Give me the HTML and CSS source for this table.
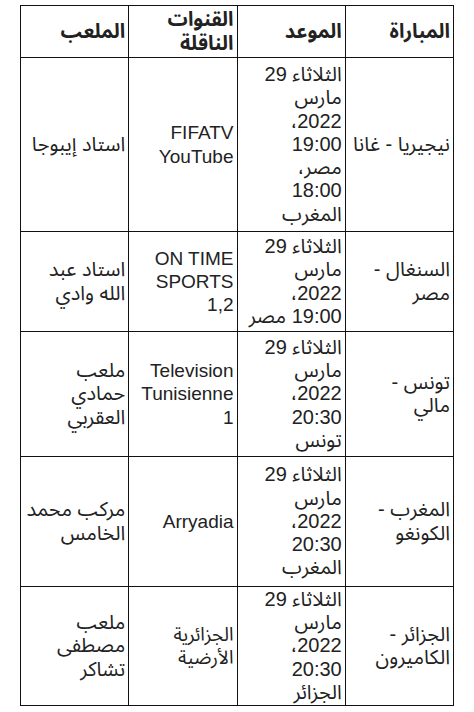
FILE: index.html
```html
<!DOCTYPE html>
<html lang="ar" dir="rtl">
<head>
<meta charset="utf-8">
<link rel="stylesheet" href="styles.css">
</head>
<body>
<table class="matches">
  <thead>
    <tr class="row-head">
      <th>المباراة</th>
      <th>الموعد</th>
      <th>القنوات<br>الناقلة</th>
      <th>الملعب</th>
    </tr>
  </thead>
  <tbody>
    <tr class="row-1">
      <td>نيجيريا - غانا</td>
      <td>الثلاثاء 29<br>مارس<br>2022،<br>19:00<br>مصر،<br>18:00<br>المغرب</td>
      <td class="ch">FIFATV<br>YouTube</td>
      <td>استاد إيبوجا</td>
    </tr>
    <tr class="row-2">
      <td>السنغال -<br>مصر</td>
      <td>الثلاثاء 29<br>مارس<br>2022،<br>19:00 مصر</td>
      <td class="ch">ON TIME<br>SPORTS<br>1,2</td>
      <td>استاد عبد<br>الله وادي</td>
    </tr>
    <tr class="row-3">
      <td>تونس -<br>مالي</td>
      <td>الثلاثاء 29<br>مارس<br>2022،<br>20:30<br>تونس</td>
      <td class="ch">Television<br>Tunisienne<br>1</td>
      <td>ملعب<br>حمادي<br>العقربي</td>
    </tr>
    <tr class="row-4">
      <td>المغرب -<br>الكونغو</td>
      <td>الثلاثاء 29<br>مارس<br>2022،<br>20:30<br>المغرب</td>
      <td class="ch">Arryadia</td>
      <td>مركب محمد<br>الخامس</td>
    </tr>
    <tr class="row-5">
      <td>الجزائر -<br>الكاميرون</td>
      <td>الثلاثاء 29<br>مارس<br>2022،<br>20:30<br>الجزائر</td>
      <td class="ch">الجزائرية<br>الأرضية</td>
      <td>ملعب<br>مصطفى<br>تشاكر</td>
    </tr>
  </tbody>
</table>
</body>
</html>
```
FILE: styles.css
```css
html, body {
  margin: 0;
  background: #fff;
}
body {
  padding: 5px 20px 0 20px;
  font-family: "Liberation Sans", "Noto Sans Arabic", "DejaVu Sans", sans-serif;
  font-size: 20px;
  color: #222;
}
.matches {
  width: 434px;
  border-collapse: collapse;
  table-layout: fixed;
  border: 1px solid #111;
}
.matches th,
.matches td {
  border: 1px solid #111;
  padding: 0 3px 0 4px;
  text-align: right;
  vertical-align: middle;
  line-height: 23.3px;
  font-weight: normal;
  white-space: nowrap;
}
.matches th {
  font-weight: bold;
}
.matches td.ch {
  font-size: 19px;
}
.row-head { height: 52px; }
.row-1 { height: 174px; }
.row-2 { height: 100px; }
.row-3 { height: 125px; }
.row-4 { height: 130px; }
.row-5 { height: 119px; }
```
